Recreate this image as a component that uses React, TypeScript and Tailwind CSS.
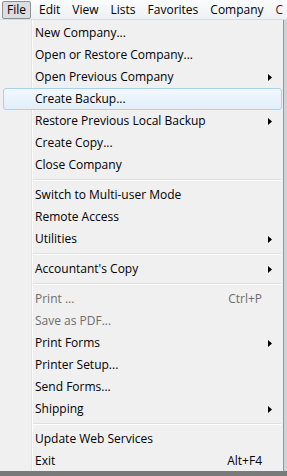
import { ReactNode } from "react";

type Item =
  | { kind: "sep" }
  | { kind: "item"; label: string; sub?: boolean; shortcut?: string; disabled?: boolean; active?: boolean };

const ITEMS: Item[] = [
  { kind: "item", label: "New Company..." },
  { kind: "item", label: "Open or Restore Company..." },
  { kind: "item", label: "Open Previous Company", sub: true },
  { kind: "item", label: "Create Backup...", active: true },
  { kind: "item", label: "Restore Previous Local Backup", sub: true },
  { kind: "item", label: "Create Copy..." },
  { kind: "item", label: "Close Company" },
  { kind: "sep" },
  { kind: "item", label: "Switch to Multi-user Mode" },
  { kind: "item", label: "Remote Access" },
  { kind: "item", label: "Utilities", sub: true },
  { kind: "sep" },
  { kind: "item", label: "Accountant's Copy", sub: true },
  { kind: "sep" },
  { kind: "item", label: "Print ...", shortcut: "Ctrl+P", disabled: true },
  { kind: "item", label: "Save as PDF...", disabled: true },
  { kind: "item", label: "Print Forms", sub: true },
  { kind: "item", label: "Printer Setup..." },
  { kind: "item", label: "Send Forms..." },
  { kind: "item", label: "Shipping", sub: true },
  { kind: "sep" },
  { kind: "item", label: "Update Web Services" },
  { kind: "item", label: "Exit", shortcut: "Alt+F4" },
];

const TOP = ["Edit", "View", "Lists", "Favorites", "Company"];

function Arrow() {
  return (
    <svg width="4" height="7" viewBox="0 0 4 7" className="block">
      <path d="M0 0 L4 3.5 L0 7 Z" fill="#000" />
    </svg>
  );
}

function Row({ children, active }: { children: ReactNode; active?: boolean }) {
  return (
    <div className="flex h-[22px]">
      <div
        className={
          active
            ? "flex flex-1 items-center ml-[3px] mr-[1px] rounded-[3px] border border-[#aad1ec] bg-gradient-to-b from-[#f2f8fd] to-[#e2eefa]"
            : "flex flex-1 items-center ml-[3px] mr-[1px] border border-transparent"
        }
      >
        {children}
      </div>
    </div>
  );
}

export default function App() {
  return (
    <div
      className="w-[287px] h-[476px] overflow-hidden flex flex-col bg-[#f0f0f0] text-[12px] text-black"
      style={{ fontFamily: '"Open Sans", "Noto Sans", sans-serif' }}
    >
      <div className="h-[20px] flex items-center bg-gradient-to-b from-[#fbfcfd] to-[#eef0f3] border-b border-[#d8dbe0] shrink-0">
        <div className="ml-[2px] h-[18px] px-[4px] flex items-center rounded-[2px] border border-[#8d9196] bg-[#dcdde0]">
          File
        </div>
        <div className="flex gap-[12px] ml-[8px]">
          {TOP.map((t) => (
            <span key={t}>{t}</span>
          ))}
        </div>
        <span className="ml-[12px] text-[#5a0b14]">C</span>
      </div>

      <div className="flex flex-1 min-h-0">
        <div className="w-[284px] flex flex-col border-r border-[#979797] bg-[#f0f0f0] relative">
          <div className="absolute left-[31px] top-0 bottom-0 w-[2px] border-l border-[#e2e3e3] bg-white" />
          <div className="relative flex flex-col pt-[2px]">
            {ITEMS.map((it, i) =>
              it.kind === "sep" ? (
                <div key={i} className="h-[8px] flex items-center pl-[33px] pr-[2px]">
                  <div className="w-full h-[2px] border-t border-[#e0e0e0] bg-white" />
                </div>
              ) : (
                <Row key={i} active={it.active}>
                  <span className={"ml-[31px] flex-1 " + (it.disabled ? "text-[#6d6d6d]" : "")}>{it.label}</span>
                  {it.shortcut && (
                    <span className={"mr-[19px] " + (it.disabled ? "text-[#6d6d6d]" : "")}>{it.shortcut}</span>
                  )}
                  {it.sub && (
                    <span className="mr-[9px]">
                      <Arrow />
                    </span>
                  )}
                </Row>
              )
            )}
          </div>
          <div className="flex-1" />
        </div>
        <div className="flex-1 bg-[#cfd3d6]" />
      </div>
      <div className="h-[5px] bg-[#7a7a7a] shrink-0" />
    </div>
  );
}
